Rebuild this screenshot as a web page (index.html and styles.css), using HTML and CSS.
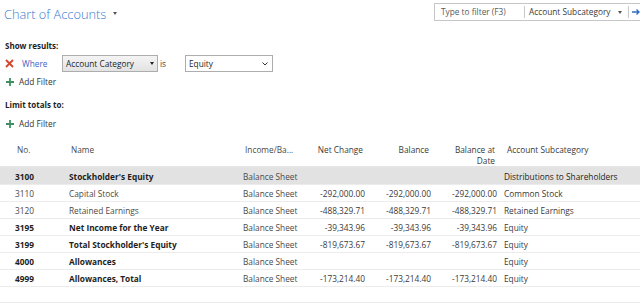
FILE: index.html
```html
<!DOCTYPE html>
<html>
<head>
<meta charset="utf-8">
<link rel="stylesheet" href="styles.css">
</head>
<body>
<div class="page">
  <div class="topbar">
    <div class="title">Chart of Accounts <span class="title-caret"></span></div>
    <div class="search">
      <span class="search-input">Type to filter (F3)</span>
      <span class="search-field">Account Subcategory <span class="caret"></span></span>
      <span class="search-go">
        <svg width="10" height="10" viewBox="0 0 10 10"><path d="M0 5H7M4.5 2.5L7 5L4.5 7.5" stroke="#2b6cc0" stroke-width="1.3" fill="none"/><path d="M9 1.5V8.5" stroke="#2b6cc0" stroke-width="1.3"/></svg>
      </span>
    </div>
  </div>

  <div class="filters">
    <div class="label show">Show results:</div>
    <div class="filter-row">
      <svg class="x-icon" width="9" height="9" viewBox="0 0 9 9"><path d="M1 1L8 8M8 1L1 8" stroke="#d5452b" stroke-width="1.8"/></svg>
      <span class="where">Where</span>
      <span class="select sel-field">Account Category <span class="caret dark"></span></span>
      <span class="is">is</span>
      <span class="select sel-value">Equity <svg class="chev" width="6" height="4" viewBox="0 0 6 4"><path d="M0.5 0.5L3 3L5.5 0.5" stroke="#333" stroke-width="1" fill="none"/></svg></span>
    </div>
    <div class="add add1"><svg class="plus" width="8" height="8" viewBox="0 0 8 8"><path d="M4 0V8M0 4H8" stroke="#3f8f63" stroke-width="1.8"/></svg><span>Add Filter</span></div>
    <div class="label limit">Limit totals to:</div>
    <div class="add add2"><svg class="plus" width="8" height="8" viewBox="0 0 8 8"><path d="M4 0V8M0 4H8" stroke="#3f8f63" stroke-width="1.8"/></svg><span>Add Filter</span></div>
  </div>

  <div class="grid">
    <div class="row head">
      <div class="c no">No.</div>
      <div class="c name">Name</div>
      <div class="c inc">Income/Ba...</div>
      <div class="c num">Net Change</div>
      <div class="c num">Balance</div>
      <div class="c num">Balance at<br>Date</div>
      <div class="c sub">Account Subcategory</div>
    </div>
    <div class="row bold selected">
      <div class="c no">3100</div>
      <div class="c name">Stockholder's Equity</div>
      <div class="c inc">Balance Sheet</div>
      <div class="c num"></div>
      <div class="c num"></div>
      <div class="c num"></div>
      <div class="c sub">Distributions to Shareholders</div>
    </div>
    <div class="row plain">
      <div class="c no">3110</div>
      <div class="c name">Capital Stock</div>
      <div class="c inc">Balance Sheet</div>
      <div class="c num">-292,000.00</div>
      <div class="c num">-292,000.00</div>
      <div class="c num">-292,000.00</div>
      <div class="c sub">Common Stock</div>
    </div>
    <div class="row plain">
      <div class="c no">3120</div>
      <div class="c name">Retained Earnings</div>
      <div class="c inc">Balance Sheet</div>
      <div class="c num">-488,329.71</div>
      <div class="c num">-488,329.71</div>
      <div class="c num">-488,329.71</div>
      <div class="c sub">Retained Earnings</div>
    </div>
    <div class="row bold">
      <div class="c no">3195</div>
      <div class="c name">Net Income for the Year</div>
      <div class="c inc">Balance Sheet</div>
      <div class="c num">-39,343.96</div>
      <div class="c num">-39,343.96</div>
      <div class="c num">-39,343.96</div>
      <div class="c sub">Equity</div>
    </div>
    <div class="row bold">
      <div class="c no">3199</div>
      <div class="c name">Total Stockholder's Equity</div>
      <div class="c inc">Balance Sheet</div>
      <div class="c num">-819,673.67</div>
      <div class="c num">-819,673.67</div>
      <div class="c num">-819,673.67</div>
      <div class="c sub">Equity</div>
    </div>
    <div class="row bold">
      <div class="c no">4000</div>
      <div class="c name">Allowances</div>
      <div class="c inc">Balance Sheet</div>
      <div class="c num"></div>
      <div class="c num"></div>
      <div class="c num"></div>
      <div class="c sub">Equity</div>
    </div>
    <div class="row bold">
      <div class="c no">4999</div>
      <div class="c name">Allowances, Total</div>
      <div class="c inc">Balance Sheet</div>
      <div class="c num">-173,214.40</div>
      <div class="c num">-173,214.40</div>
      <div class="c num">-173,214.40</div>
      <div class="c sub">Equity</div>
    </div>
    <div class="row empty"></div>
  </div>
</div>
</body>
</html>
```

FILE: styles.css
```css
html, body {
  margin: 0;
  padding: 0;
  background: #ffffff;
  overflow: hidden;
}
.page {
  width: 640px;
  height: 307px;
  overflow: hidden;
  font-family: "Open Sans", "Noto Sans", sans-serif;
  font-size: 8.3px;
  color: #333;
}
.topbar {
  display: flex;
  justify-content: space-between;
  align-items: flex-start;
  height: 24px;
}
.title {
  padding: 4px 0 0 4px;
  font-size: 12.8px;
  line-height: 20px;
  color: #3a7bd0;
  font-weight: 300;
  display: flex;
  align-items: center;
  gap: 7px;
}
.title-caret {
  width: 0;
  height: 0;
  border-left: 2.5px solid transparent;
  border-right: 2.5px solid transparent;
  border-top: 3px solid #555;
  margin-top: -1px;
}
.search {
  margin-top: 3px;
  margin-right: -20px;
  width: 226px;
  height: 18px;
  box-sizing: border-box;
  border: 1px solid #c6c6c6;
  display: flex;
  align-items: center;
  color: #555;
}
.search-input {
  width: 83px;
  padding-left: 6px;
  color: #5a5a5a;
  border-right: 1px solid #c8c8c8;
  line-height: 12px;
}
.search-field {
  padding-left: 4px;
  width: 99px;
  border-right: 1px solid #c8c8c8;
  line-height: 12px;
  display: flex;
  align-items: center;
  gap: 8px;
  color: #3a3a3a;
}
.caret {
  display: inline-block;
  width: 0;
  height: 0;
  border-left: 2.5px solid transparent;
  border-right: 2.5px solid transparent;
  border-top: 3px solid #555;
}
.caret.dark {
  border-top-color: #222;
}
.search-go {
  padding-left: 3px;
  display: flex;
  align-items: center;
}
.filters {
  padding-left: 5px;
}
.label {
  font-weight: 700;
  font-size: 8px;
  color: #1e1e1e;
  line-height: 12px;
}
.show {
  margin-top: 16px;
}
.filter-row {
  margin-top: 3px;
  height: 17px;
  display: flex;
  align-items: center;
}
.x-icon {
  margin-right: 8px;
}
.where {
  color: #3f5fc6;
  width: 40px;
}
.select {
  box-sizing: border-box;
  height: 17px;
  border: 1px solid #adadad;
  display: flex;
  align-items: center;
  justify-content: space-between;
  color: #1e1e1e;
}
.sel-field {
  width: 96px;
  padding: 0 3px 0 3px;
  background: linear-gradient(#f4f4f4, #e3e3e3);
}
.is {
  width: 27px;
  padding-left: 2px;
  box-sizing: border-box;
  color: #444;
}
.sel-value {
  width: 88px;
  padding: 0 4px 0 3px;
  background: #fff;
}
.chev {
  display: block;
}
.add {
  display: flex;
  align-items: center;
  line-height: 12px;
  color: #333;
}
.plus {
  margin: 0 5px 0 1px;
}
.add1 {
  margin-top: 4px;
}
.limit {
  margin-top: 11px;
}
.add2 {
  margin-top: 7px;
}
.grid {
  margin-top: 14px;
}
.row {
  display: grid;
  grid-template-columns: 69px 174px 67px 55px 66px 66px 1fr;
  height: 16px;
  align-items: center;
  border-bottom: 1px solid #ececec;
  line-height: 11px;
  white-space: nowrap;
}
.row.head {
  height: 22px;
  align-items: start;
  border-bottom: 2px solid #e4e4e4;
  color: #4a4a4a;
}
.c.no {
  padding-left: 15px;
}
.c.sub {
  padding-left: 7px;
}
.c.num {
  text-align: right;
}
.head .c.no,
.head .c.name,
.head .c.inc,
.head .c.sub {
  padding-left: 2px;
}
.head .c.no {
  padding-left: 17px;
}
.head .c.sub {
  padding-left: 10px;
}
.head .c.num {
  padding-right: 2px;
}
.row.selected {
  background: #e2e2e2;
}
.row.bold .no,
.row.bold .name {
  font-weight: 700;
  color: #1e1e1e;
}
.row.selected .sub {
  color: #1e1e1e;
}
.row.plain .no,
.row.plain .name {
  color: #4a4a4a;
}
.inc {
  color: #4a4a4a;
}
.num {
  color: #3a3a3a;
}
.sub {
  color: #3a3a3a;
}
.row.empty {
  height: 15px;
}
```
